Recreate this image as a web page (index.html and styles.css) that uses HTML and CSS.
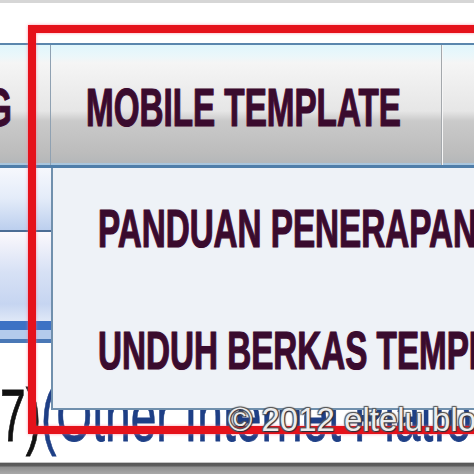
FILE: index.html
```html
<!DOCTYPE html>
<html lang="en">
<head>
    <meta charset="UTF-8">
    <title>Mobile Template Menu</title>
    <link rel="stylesheet" href="styles.css">
</head>
<body>
    <div class="top-band"></div>
    <div class="page">
        <div class="menubar">
            <div class="tab tab-first"><span class="tab-text shift">BLOG</span></div>
            <div class="tab tab-main"><span class="tab-text">MOBILE TEMPLATE</span></div>
            <div class="tab tab-rest"></div>
        </div>

        <div class="content">
            <div class="side">
                <div class="side-cell cell-one"></div>
                <div class="side-cell cell-two"></div>
                <div class="side-stripe"></div>
            </div>
            <p class="note"><span class="note-text">7)<a href="#" class="note-link">(Other Internet Platform)</a></span></p>

            <!-- dropdown of the MOBILE TEMPLATE tab -->
            <ul class="dropdown">
                <li class="drop-item"><span class="tab-text">PANDUAN PENERAPAN</span></li>
                <li class="drop-item"><span class="tab-text">UNDUH BERKAS TEMPLATE</span></li>
            </ul>

            <div class="watermark">&copy; 2012 eltelu.blogspot.com</div>
        </div>

        <div class="highlight"></div>
    </div>
    <div class="bottom-band"></div>
</body>
</html>
```

FILE: styles.css
```css
* { margin: 0; padding: 0; box-sizing: border-box; }
html, body {
    width: 474px;
    height: 474px;
    overflow: hidden;
}
body {
    font-family: 'Liberation Sans', Arial, sans-serif;
    background: #fff;
}
.top-band {
    height: 3px;
    background: #d6d6d6;
}
.page {
    position: relative;
    padding-top: 40px;
    height: 459px;
}

/* menu bar */
.menubar {
    display: flex;
    height: 125px;
    border-top: 2px solid #5a86ad;
    border-bottom: 3px solid #4f7eaa;
    background: linear-gradient(to bottom, #e0f6fc 0, #ebf7fa 11px, #f5f5f5 18px, #e6e6e6 66px, #cacaca 76px, #bcbcbc 108px, #b3b6b9 120px);
    box-shadow: inset 0 -2px 0 #a9c6de;
    overflow: hidden;
}
.tab {
    padding-top: 35px;
    overflow: hidden;
    white-space: nowrap;
}
.tab-first {
    width: 51px;
    border-right: 1px solid #8fa1b2;
}
.tab-main {
    width: 391px;
    padding-left: 35px;
    border-right: 1px solid #a4a8ac;
}
.tab-rest {
    flex: 1;
    border-left: 1px solid #f6f6f6;
}
.tab-text {
    display: inline-block;
    font-size: 54px;
    line-height: 54px;
    font-weight: bold;
    color: #3a0b2e;
    -webkit-text-stroke: 1.2px #3a0b2e;
    text-shadow: 0 0 2px rgba(225, 110, 165, 0.6);
    transform: scaleX(0.615);
    transform-origin: left center;
    white-space: nowrap;
}
.shift {
    margin-left: -84px;
}

/* page content under the bar */
.content {
    position: relative;
    height: 294px;
}
.side {
    width: 51px;
}
.side-cell {
    border-bottom: 2px solid #4b6c94;
}
.cell-one {
    height: 64px;
    background: linear-gradient(to bottom, #f6f8fd 0, #e4ecf9 30px, #bccfee 62px);
}
.cell-two {
    height: 89px;
    border-bottom: none;
    background: linear-gradient(to bottom, #fbf8fc 0, #d7e1f5 40px, #c6d5f1 72px, #dfe8f7 89px);
}
.side-stripe {
    height: 22px;
    border-top: 9px solid #3d72c4;
    border-bottom: 4px solid #4a78b6;
    background: #b4cbec;
}
.note {
    margin-top: 35px;
    height: 75px;
    white-space: nowrap;
}
.note-text {
    display: inline-block;
    font-size: 75px;
    line-height: 75px;
    color: #111;
    -webkit-text-stroke: 0.8px #111;
    transform: scaleX(0.615);
    transform-origin: left center;
}
.note-link {
    color: #1e3f86;
    -webkit-text-stroke: 0.8px #1e3f86;
    text-decoration: none;
}

.dropdown {
    list-style: none;
    position: absolute;
    top: 0;
    left: 51px;
    right: 0;
    height: 242px;
    background: #eef2f7;
    border-left: 2px solid #7090ad;
    border-bottom: 2px solid #7090ad;
    overflow: hidden;
}
.drop-item {
    height: 122px;
    padding: 33px 0 0 45px;
    white-space: nowrap;
}
.watermark {
    position: absolute;
    left: 228px;
    top: 232px;
    font-size: 33px;
    line-height: 40px;
    color: #ececec;
    white-space: nowrap;
    text-shadow: 1px 1px 1px #2a2a3a, -1px -1px 1px #555, 1px -1px 1px #555, -1px 1px 1px #555;
    z-index: 2;
}

/* red highlight frame drawn over the screenshot */
.highlight {
    position: absolute;
    left: 28px;
    top: 22px;
    right: -40px;
    height: 409px;
    border: 8px solid #e5121b;
    box-shadow: 0 0 3px rgba(255, 110, 140, 0.7), inset 0 0 3px rgba(255, 110, 140, 0.7);
    z-index: 1;
}

.bottom-band {
    height: 12px;
    border-top: 1px solid #c4c4c4;
    background: linear-gradient(to bottom, #575757 0, #5e5e5e 3px, #8f8f8f 4px, #a9a9a9 11px);
}
```
